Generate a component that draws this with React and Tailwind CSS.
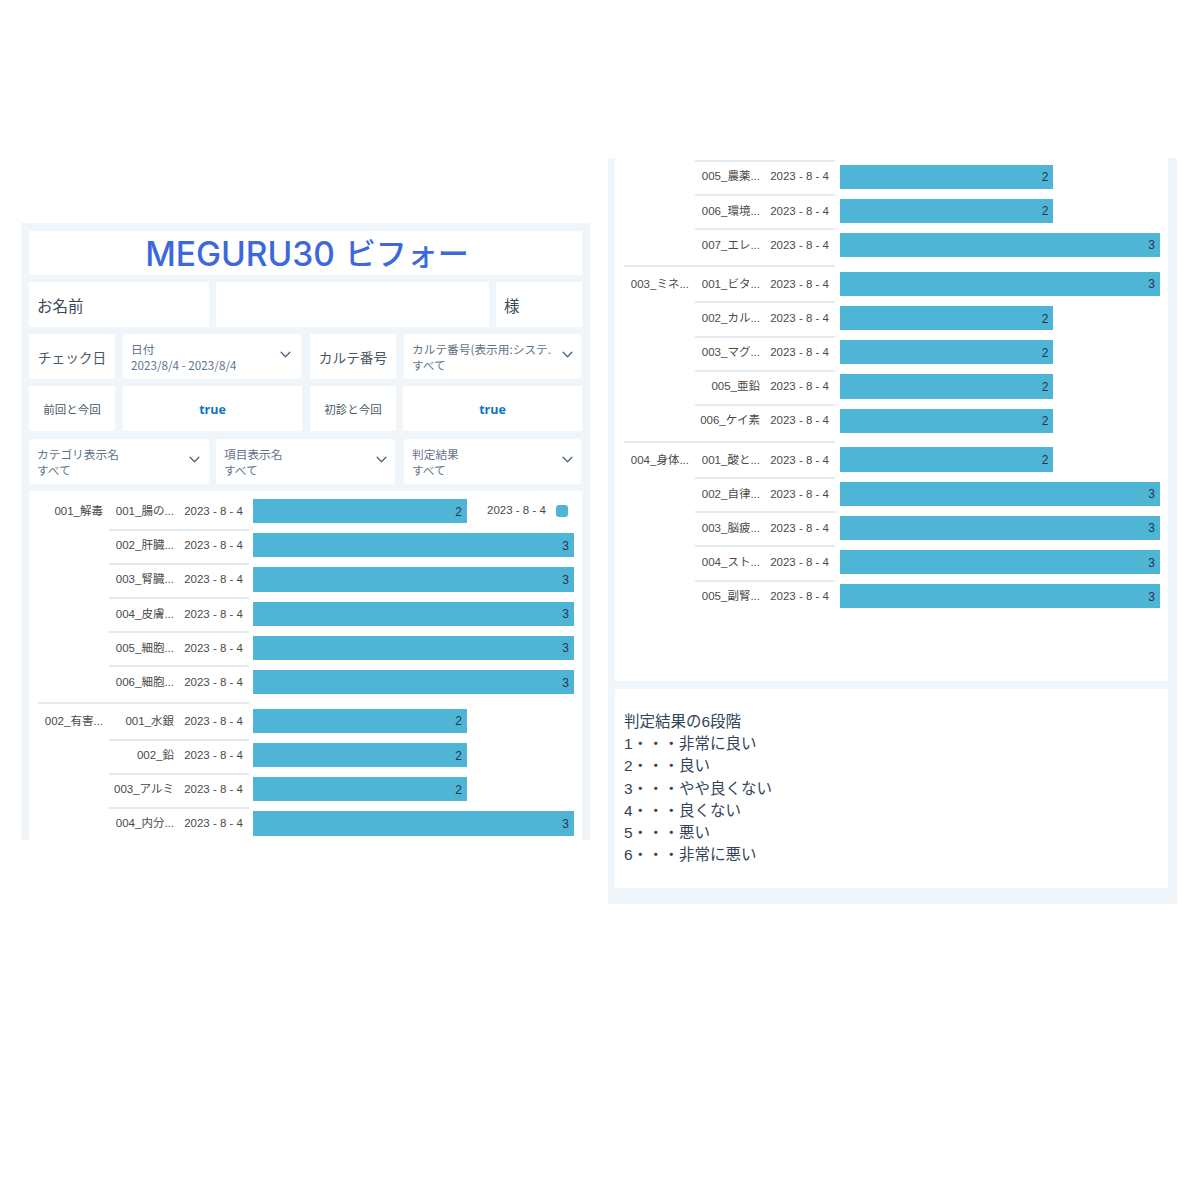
import React from "react";

const jp = "font-['Noto_Sans_CJK_JP','Noto_Sans',sans-serif]";
const chartFont = "font-['Liberation_Sans','Noto_Sans_CJK_JP',sans-serif]";

function Chevron({ className = "" }) {
  return (
    <svg viewBox="0 0 12 8" className={"w-[11px] h-[7px] shrink-0 mb-[5px] " + className} fill="none" stroke="#4a647e" strokeWidth="1.5" strokeLinecap="round" strokeLinejoin="round">
      <path d="M1 1.5 L6 6.5 L11 1.5" />
    </svg>
  );
}

function Dropdown({ label, value, className = "", pad = "pr-[9px]" }) {
  return (
    <div className={"bg-white rounded-[3px] flex items-center justify-between pl-[8px] h-[45px] " + pad + " " + className}>
      <div className={"text-[11.7px] leading-[15.5px] text-[#62748b] whitespace-nowrap overflow-hidden " + jp}>
        <div className="overflow-hidden">{label}</div>
        <div>{value}</div>
      </div>
      <Chevron className="ml-[6px]" />
    </div>
  );
}

function Cell({ children, className = "" }) {
  return <div className={"bg-white h-[45px] flex items-center " + jp + " " + className}>{children}</div>;
}

function Row({ name, value, first, right }) {
  return (
    <div className="flex h-[34.2px] items-start">
      <div className={"w-[140px] h-full flex items-center text-[11.5px] text-[#4a4a4a] whitespace-nowrap " + (first ? "pt-[1px]" : "pb-[2px] border-t-[2px] border-[#e1eaef]")}>
        <div className="w-[65px] text-right">{name}</div>
        <div className="w-[60px] ml-[9px] text-right">2023 - 8 - 4</div>
      </div>
      <div className={"mt-[4.5px] " + (right ? "ml-[5px] w-[320px]" : "ml-[4px] w-[321px]")}>
        <div className={"h-[24.2px] bg-[#4fb5d6] flex items-center justify-end pr-[5px] pt-[1px] text-[12px] text-[#24364a] " + (value === 2 ? "w-2/3" : "w-full")}>
          {value}
        </div>
      </div>
    </div>
  );
}

function Group({ label, rows, divider, firstBorder, right }) {
  return (
    <div>
      {divider && <div className="mt-[2.7px] w-[211px] h-[2px] bg-[#e1eaef]" />}
      <div className="flex">
        <div className="w-[71px] shrink-0 h-[34.2px] flex items-center justify-end pr-[6px] pt-[1px] text-[11.5px] text-[#4a4a4a] whitespace-nowrap">{label}</div>
        <div>
          {rows.map(([n, v], i) => (
            <Row key={n} name={n} value={v} first={i === 0 && !firstBorder} right={right} />
          ))}
        </div>
      </div>
    </div>
  );
}

const lines = ["判定結果の6段階", "1・・・非常に良い", "2・・・良い", "3・・・やや良くない", "4・・・良くない", "5・・・悪い", "6・・・非常に悪い"];

export default function App() {
  return (
    <div className="w-[1200px] h-[1200px] bg-white flex items-start pl-[21px] gap-[18px] overflow-hidden">
      {/* left page */}
      <div className="mt-[223px] w-[569px] h-[617px] bg-[#f0f5f9] px-[8px] pt-[8px] flex flex-col overflow-hidden">
        <div className="bg-white h-[44px] shrink-0 flex items-center justify-center pt-[3px] pl-[3px] text-[33.5px] font-medium text-[#3d68dc] font-['Inter','Noto_Sans_CJK_JP',sans-serif]">
          <span>MEGURU30</span>
          <span className="ml-[10px] text-[31px]">ビフォー</span>
        </div>
        <div className="flex gap-[7px] mt-[7px] shrink-0">
          <Cell className="w-[180px] pl-[8px] pt-[3px] text-[15.5px] text-[#3c4a57]">お名前</Cell>
          <Cell className="w-[273px]" />
          <Cell className="w-[86px] pl-[8px] pt-[2px] text-[15.5px] text-[#3c4a57]">様</Cell>
        </div>
        <div className="flex mt-[7px] shrink-0">
          <Cell className="w-[86px] justify-center pt-[2px] text-[13.7px] text-[#4a5863]">チェック日</Cell>
          <Dropdown label="日付" value="2023/8/4 - 2023/8/4" className="w-[178px] ml-[8px]" pad="pr-[10px]" />
          <Cell className="w-[86px] ml-[9px] justify-center pt-[2px] text-[13.7px] text-[#4a5863]">カルテ番号</Cell>
          <Dropdown label="カルテ番号(表示用:システ." value="すべて" className="w-[177px] ml-[8px]" pad="pr-[8px]" />
        </div>
        <div className="flex mt-[7px] shrink-0">
          <Cell className="w-[86px] justify-center pt-[2px] text-[11.5px] text-[#4a5863]">前回と今回</Cell>
          <Cell className="w-[179px] ml-[8px] justify-center">
            <span className="text-[12.5px] font-bold text-[#0f74c4] font-['Open_Sans',sans-serif] pt-[3px]">true</span>
          </Cell>
          <Cell className="w-[86px] ml-[8px] justify-center pt-[2px] text-[11.5px] text-[#4a5863]">初診と今回</Cell>
          <Cell className="w-[179px] ml-[7px] justify-center">
            <span className="text-[12.5px] font-bold text-[#0f74c4] font-['Open_Sans',sans-serif] pt-[3px]">true</span>
          </Cell>
        </div>
        <div className="flex mt-[8px] shrink-0">
          <Dropdown label="カテゴリ表示名" value="すべて" className="w-[180px]" />
          <Dropdown label="項目表示名" value="すべて" className="w-[179px] ml-[7px]" pad="pr-[8px]" />
          <Dropdown label="判定結果" value="すべて" className="w-[177px] ml-[9px]" pad="pr-[8px]" />
        </div>
        <div className={"relative bg-white mt-[7px] flex-1 pl-[9px] pt-[3.5px] overflow-hidden " + chartFont}>
          <Group label="001_解毒" rows={[["001_腸の...", 2], ["002_肝臓...", 3], ["003_腎臓...", 3], ["004_皮膚...", 3], ["005_細胞...", 3], ["006_細胞...", 3]]} />
          <Group divider label="002_有害..." rows={[["001_水銀", 2], ["002_鉛", 2], ["003_アルミ", 2], ["004_内分...", 3]]} />
          <div className="absolute left-[458px] top-[11px] flex items-center text-[11.5px] text-[#4a4a4a] whitespace-nowrap">
            <span>2023 - 8 - 4</span>
            <span className="ml-[10px] w-[12px] h-[12px] rounded-[3px] bg-[#4fb5d6]" />
          </div>
        </div>
      </div>

      {/* right page */}
      <div className="mt-[158px] w-[569px] h-[746px] bg-[#f0f5f9] pl-[7px] pr-[9px] flex flex-col overflow-hidden">
        <div className={"bg-white h-[523px] shrink-0 pl-[9px] pt-[2px] overflow-hidden " + chartFont}>
          <Group right firstBorder label="" rows={[["005_農薬...", 2], ["006_環境...", 2], ["007_エレ...", 3]]} />
          <Group right divider label="003_ミネ..." rows={[["001_ビタ...", 3], ["002_カル...", 2], ["003_マグ...", 2], ["005_亜鉛", 2], ["006_ケイ素", 2]]} />
          <Group right divider label="004_身体..." rows={[["001_酸と...", 2], ["002_自律...", 3], ["003_脳疲...", 3], ["004_スト...", 3], ["005_副腎...", 3]]} />
        </div>
        <div className="bg-white h-[199px] mt-[8px] shrink-0 pl-[9px] pt-[22px] text-[15.5px] leading-[22.2px] text-[#33445a] font-['Liberation_Sans','Noto_Sans_CJK_JP',sans-serif]">
          {lines.map((l) => (
            <div key={l}>{l}</div>
          ))}
        </div>
      </div>
    </div>
  );
}
